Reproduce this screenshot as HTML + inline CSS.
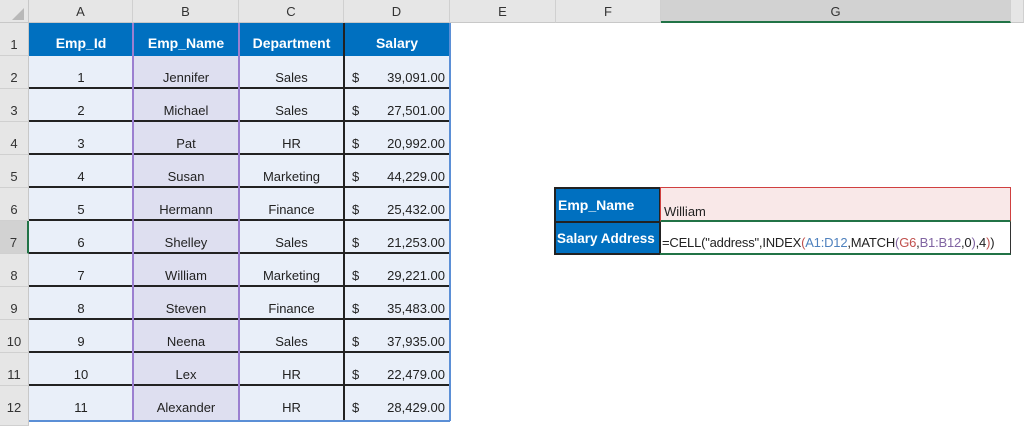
<!DOCTYPE html><html><head><style>
body{margin:0;width:1024px;height:426px;overflow:hidden;background:#fff;font-family:"Liberation Sans",Arial,sans-serif;position:relative}
div{position:absolute;box-sizing:border-box}
.ch{top:0;height:23px;background:#e6e6e6;border-right:1px solid #d0d0d0;border-bottom:1px solid #c8c8c8;text-align:center;font-size:13px;line-height:23px;color:#333}
.rh{left:0;width:29px;background:#e6e6e6;border-bottom:1px solid #d0d0d0;border-right:1px solid #c8c8c8;text-align:center;font-size:13px;color:#333}
.c{text-align:center;font-size:13px;color:#222;padding-top:14px}
.h{background:#0070c0;color:#fff;font-weight:bold;font-size:14px;text-align:center;padding-top:12px;height:33px}
.line{height:2px;background:#222}
</style></head><body>
<div style="left:0;top:0;width:29px;height:23px;background:#e6e6e6;border-right:1px solid #c8c8c8;border-bottom:1px solid #c8c8c8"></div>
<div style="left:12px;top:8px;width:0;height:0;border-left:12px solid transparent;border-bottom:12px solid #b8b8b8"></div>
<div class="ch" style="left:29px;width:104px">A</div>
<div class="ch" style="left:133px;width:106px">B</div>
<div class="ch" style="left:239px;width:105px">C</div>
<div class="ch" style="left:344px;width:106px">D</div>
<div class="ch" style="left:450px;width:106px">E</div>
<div class="ch" style="left:556px;width:105px">F</div>
<div class="ch" style="left:661px;width:350px;background:#d2d2d2;border-bottom:2px solid #217346">G</div>
<div class="ch" style="left:1011px;width:13px"></div>
<div class="rh" style="top:23px;height:33px;line-height:43px">1</div>
<div class="rh" style="top:56px;height:33px;line-height:43px">2</div>
<div class="rh" style="top:89px;height:33px;line-height:43px">3</div>
<div class="rh" style="top:122px;height:33px;line-height:43px">4</div>
<div class="rh" style="top:155px;height:33px;line-height:43px">5</div>
<div class="rh" style="top:188px;height:33px;line-height:43px">6</div>
<div class="rh" style="top:221px;height:33px;line-height:43px;background:#d2d2d2;border-right:2px solid #217346">7</div>
<div class="rh" style="top:254px;height:33px;line-height:43px">8</div>
<div class="rh" style="top:287px;height:33px;line-height:43px">9</div>
<div class="rh" style="top:320px;height:33px;line-height:43px">10</div>
<div class="rh" style="top:353px;height:33px;line-height:43px">11</div>
<div class="rh" style="top:386px;height:40px;line-height:43px">12</div>
<div style="left:29px;top:56px;width:421px;height:365px;background:#e9eff9"></div>
<div style="left:133px;top:56px;width:106px;height:365px;background:#dedff0"></div>
<div class="h" style="left:29px;top:23px;width:104px">Emp_Id</div>
<div class="h" style="left:133px;top:23px;width:106px">Emp_Name</div>
<div class="h" style="left:239px;top:23px;width:105px">Department</div>
<div class="h" style="left:344px;top:23px;width:106px">Salary</div>
<div id="rows"></div>
<script>
var d=[[1,"Jennifer","Sales","39,091.00"],[2,"Michael","Sales","27,501.00"],[3,"Pat","HR","20,992.00"],[4,"Susan","Marketing","44,229.00"],[5,"Hermann","Finance","25,432.00"],[6,"Shelley","Sales","21,253.00"],[7,"William","Marketing","29,221.00"],[8,"Steven","Finance","35,483.00"],[9,"Neena","Sales","37,935.00"],[10,"Lex","HR","22,479.00"],[11,"Alexander","HR","28,429.00"]];
var h="";
d.forEach(function(r,i){var t=56+i*33;
h+='<div class="c" style="left:29px;top:'+t+'px;width:104px">'+r[0]+'</div>';
h+='<div class="c" style="left:133px;top:'+t+'px;width:106px">'+r[1]+'</div>';
h+='<div class="c" style="left:239px;top:'+t+'px;width:105px">'+r[2]+'</div>';
h+='<div class="c" style="left:352px;top:'+t+'px;width:20px;text-align:left">$</div>';
h+='<div class="c" style="left:370px;top:'+t+'px;width:75px;text-align:right">'+r[3]+'</div>';
if(i<10)h+='<div class="line" style="left:29px;top:'+(t+31)+'px;width:421px"></div>';
});
document.getElementById("rows").outerHTML=h;
</script>
<div style="left:343px;top:23px;width:2px;height:398px;background:#222"></div>
<div style="left:132px;top:23px;width:2px;height:398px;background:#9b7fd0"></div>
<div style="left:238px;top:23px;width:2px;height:398px;background:#9b7fd0"></div>
<div style="left:449px;top:23px;width:2px;height:398px;background:#5b8fd6"></div>
<div style="left:29px;top:420px;width:421px;height:2px;background:#5b8fd6"></div>
<div style="left:554px;top:187px;width:107px;height:68px;background:#0070c0;border:2px solid #222"></div>
<div style="left:554px;top:221px;width:107px;height:2px;background:#222"></div>
<div style="left:558px;top:197px;color:#fff;font-weight:bold;font-size:14px">Emp_Name</div>
<div style="left:557px;top:231px;color:#fff;font-weight:bold;font-size:13.5px;white-space:nowrap">Salary Address</div>
<div style="left:660px;top:187px;width:351px;height:35px;background:#f9e8e8;border:1px solid #d04040;border-bottom:2px solid #217346"></div>
<div style="left:664px;top:204px;font-size:13px;color:#222">William</div>
<div style="left:660px;top:222px;width:351px;height:33px;border-right:1px solid #333;border-bottom:2px solid #217346"></div>
<div style="left:662px;top:235px;font-size:13px;color:#222;white-space:nowrap;letter-spacing:-0.2px">=CELL("address",INDEX<span style="color:#c0504d">(</span><span style="color:#4f81bd">A1:D12</span>,MATCH<span style="color:#8064a2">(</span><span style="color:#c0504d">G6</span>,<span style="color:#8064a2">B1:B12</span>,0<span style="color:#8064a2">)</span>,4<span style="color:#c0504d">)</span>)</div>
</body></html>
